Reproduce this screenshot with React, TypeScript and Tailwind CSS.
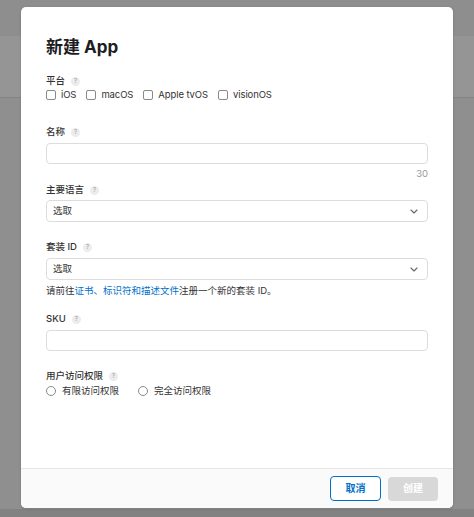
import React from "react";

const font = { fontFamily: "Inter, 'Noto Sans CJK SC', 'Noto Sans', sans-serif" };

function Help() {
  return (
    <span className="ml-[6px] inline-flex h-[9px] w-[9px] items-center justify-center rounded-full bg-[#ececec] text-[6px] font-normal leading-none text-[#a0a0a0]">
      ?
    </span>
  );
}

function Label({ children }: { children: React.ReactNode }) {
  return (
    <div className="flex h-[14px] items-center text-[9.5px] font-medium leading-[14px] text-[#333]">
      {children}
      <Help />
    </div>
  );
}

function Check({ label }: { label: string }) {
  return (
    <label className="mr-[10px] flex items-center">
      <span className="mr-[5px] h-[10px] w-[10px] rounded-[2px] border border-[#8a8a8a] bg-white" />
      <span className="tracking-[-0.1px]">{label}</span>
    </label>
  );
}

function Radio({ label }: { label: string }) {
  return (
    <label className="mr-[19px] flex items-center">
      <span className="mr-[6px] h-[10px] w-[10px] rounded-full border border-[#8a8a8a] bg-white" />
      <span>{label}</span>
    </label>
  );
}

function Chevron() {
  return (
    <svg width="8" height="5" viewBox="0 0 8 5" fill="none">
      <path d="M1 1l3 3 3-3" stroke="#666" strokeWidth="1.1" strokeLinecap="round" strokeLinejoin="round" />
    </svg>
  );
}

function Select() {
  return (
    <div className="flex h-[22px] items-center justify-between rounded-[4px] border border-[#dcdcdc] bg-white pl-[6px] pr-[9px] text-[9.5px] text-[#333]">
      <span>选取</span>
      <Chevron />
    </div>
  );
}

function Input() {
  return <div className="h-[21px] rounded-[4px] border border-[#dcdcdc] bg-white" />;
}

export default function App() {
  return (
    <div className="relative h-[517px] w-[474px] overflow-hidden bg-[#8d8d8d]" style={font}>
      {/* dimmed page behind the dialog */}
      <div className="h-[36px] bg-[#8e8e8e]" />
      <div className="h-[62px] border-b border-[#858585] bg-[#959595]" />
      <div className="h-[411px] bg-[#8f8f8f]" />
      <div className="h-[8px] bg-[#828282]" />

      <div className="absolute left-[21px] top-[7px] flex h-[501px] w-[432px] flex-col overflow-hidden rounded-[5px] bg-white shadow-[0_1px_3px_rgba(0,0,0,0.15)]">
        <div className="flex-1 px-[25px] pt-[29px]">
          <h1 className="text-[17px] font-bold leading-[22px] text-[#1d1d1f]">新建 App</h1>

          <div className="mt-[16px]">
            <Label>平台</Label>
            <div className="flex h-[14px] items-center text-[9.5px] leading-[14px] text-[#333]">
              <Check label="iOS" />
              <Check label="macOS" />
              <Check label="Apple tvOS" />
              <Check label="visionOS" />
            </div>
          </div>

          <div className="mt-[23px]">
            <Label>名称</Label>
            <div className="mt-[4px]">
              <Input />
            </div>
            <div className="mt-[3px] text-right text-[9.5px] leading-[14px] text-[#9a9a9a]">30</div>
          </div>

          <div className="mt-[2px]">
            <Label>主要语言</Label>
            <div className="mt-[3px]">
              <Select />
            </div>
          </div>

          <div className="mt-[18px]">
            <Label>套装 ID</Label>
            <div className="mt-[4px]">
              <Select />
            </div>
            <div className="mt-[4px] text-[9.5px] leading-[14px] text-[#333]">
              请前往<span className="text-[#0070c9]">证书、标识符和描述文件</span>注册一个新的套装 ID。
            </div>
          </div>

          <div className="mt-[14px]">
            <Label>SKU</Label>
            <div className="mt-[4px]">
              <Input />
            </div>
          </div>

          <div className="mt-[18px]">
            <Label>用户访问权限</Label>
            <div className="mt-[1px] flex h-[14px] items-center text-[9.5px] leading-[14px] text-[#333]">
              <Radio label="有限访问权限" />
              <Radio label="完全访问权限" />
            </div>
          </div>
        </div>

        <div className="flex h-[40px] items-center justify-end gap-[7px] border-t border-[#e5e5e5] bg-[#fafafa] pr-[15px]">
          <button className="h-[25px] w-[51px] rounded-[4px] border border-[#0070c9] bg-white text-[10px] font-semibold text-[#0070c9]">
            取消
          </button>
          <button className="h-[24px] w-[50px] rounded-[4px] bg-[#d8d8d8] text-[10px] font-semibold text-white">
            创建
          </button>
        </div>
      </div>
    </div>
  );
}
